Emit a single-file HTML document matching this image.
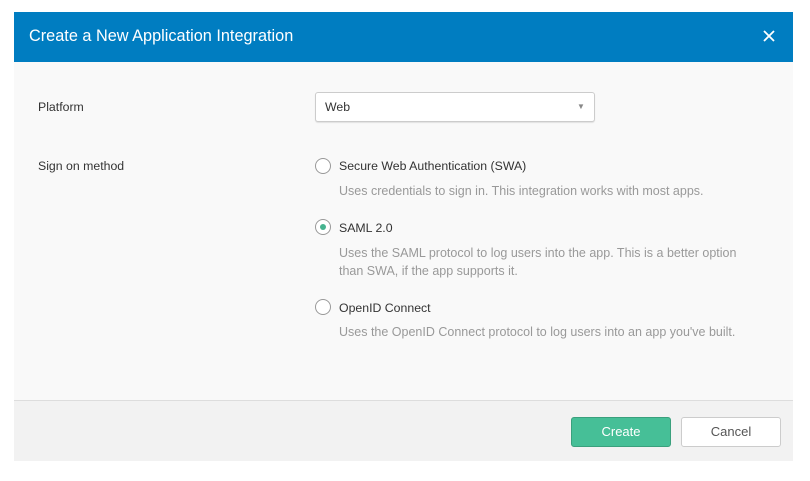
<!DOCTYPE html>
<html><head><style>
body{margin:0;width:810px;height:481px;background:#fff;font-family:"Liberation Sans",sans-serif;position:relative;overflow:hidden}
.a{position:absolute}
.hd{left:14px;top:12px;width:779px;height:50px;background:#007dc1}
.bd{left:14px;top:62px;width:779px;height:338px;background:#f9f9f9}
.ft{left:14px;top:400px;width:779px;height:61px;background:#f2f2f2;border-top:1px solid #ddd;box-sizing:border-box}
.lbl{font-size:12.3px;color:#333}
.r{width:16px;height:16px;border:1px solid #999;border-radius:50%;background:#fff;box-sizing:border-box}
.d{font-size:12.5px;color:#999;line-height:18px}
.btn{height:30px;box-sizing:border-box;border-radius:3px;font-size:13px;text-align:center;line-height:28px}
</style></head><body>
<div class="a hd"></div>
<div class="a" style="left:29px;top:27px;color:#fff;font-size:16.3px">Create a New Application Integration</div>
<svg class="a" style="left:763px;top:30px" width="12" height="12"><path d="M1 1L11 11M11 1L1 11" stroke="#fff" stroke-width="1.8"/></svg>
<div class="a bd"></div>
<div class="a lbl" style="left:38px;top:100px">Platform</div>
<div class="a" style="left:315px;top:92px;width:280px;height:30px;box-sizing:border-box;border:1px solid #ccc;border-radius:3px;background:#fff;box-shadow:0 1px 1px rgba(0,0,0,.1)"></div>
<div class="a lbl" style="left:325px;top:100px">Web</div>
<div class="a" style="left:577px;top:102px;font-size:8px;color:#888">▼</div>
<div class="a lbl" style="left:38px;top:159px">Sign on method</div>
<div class="a r" style="left:315px;top:158px"></div>
<div class="a lbl" style="left:339px;top:159px">Secure Web Authentication (SWA)</div>
<div class="a d" style="left:339px;top:182px">Uses credentials to sign in. This integration works with most apps.</div>
<div class="a r" style="left:315px;top:219px"></div>
<div class="a" style="left:320px;top:224px;width:6px;height:6px;border-radius:50%;background:#46b38f"></div>
<div class="a lbl" style="left:339px;top:221px">SAML 2.0</div>
<div class="a d" style="left:339px;top:244px;width:410px">Uses the SAML protocol to log users into the app. This is a better option than SWA, if the app supports it.</div>
<div class="a r" style="left:315px;top:299px"></div>
<div class="a lbl" style="left:339px;top:301px">OpenID Connect</div>
<div class="a d" style="left:339px;top:323px">Uses the OpenID Connect protocol to log users into an app you've built.</div>
<div class="a ft"></div>
<div class="a btn" style="left:571px;top:417px;width:100px;background:#46bf97;border:1px solid #3aa07d;color:#fff">Create</div>
<div class="a btn" style="left:681px;top:417px;width:100px;background:#fff;border:1px solid #ccc;color:#555">Cancel</div>
</body></html>
